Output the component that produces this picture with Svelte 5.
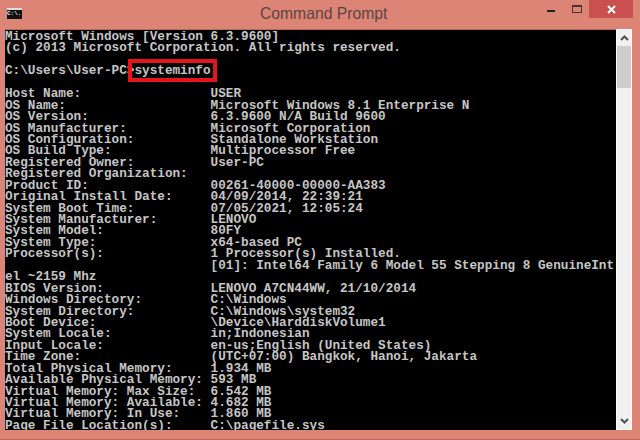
<script>
	const lines = [
		'Microsoft Windows [Version 6.3.9600]',
		'(c) 2013 Microsoft Corporation. All rights reserved.',
		'',
		'C:\\Users\\User-PC>systeminfo',
		'',
		'Host Name:                 USER',
		'OS Name:                   Microsoft Windows 8.1 Enterprise N',
		'OS Version:                6.3.9600 N/A Build 9600',
		'OS Manufacturer:           Microsoft Corporation',
		'OS Configuration:          Standalone Workstation',
		'OS Build Type:             Multiprocessor Free',
		'Registered Owner:          User-PC',
		'Registered Organization:',
		'Product ID:                00261-40000-00000-AA383',
		'Original Install Date:     04/09/2014, 22:39:21',
		'System Boot Time:          07/05/2021, 12:05:24',
		'System Manufacturer:       LENOVO',
		'System Model:              80FY',
		'System Type:               x64-based PC',
		'Processor(s):              1 Processor(s) Installed.',
		'                           [01]: Intel64 Family 6 Model 55 Stepping 8 GenuineInt',
		'el ~2159 Mhz',
		'BIOS Version:              LENOVO A7CN44WW, 21/10/2014',
		'Windows Directory:         C:\\Windows',
		'System Directory:          C:\\Windows\\system32',
		'Boot Device:               \\Device\\HarddiskVolume1',
		'System Locale:             in;Indonesian',
		'Input Locale:              en-us;English (United States)',
		'Time Zone:                 (UTC+07:00) Bangkok, Hanoi, Jakarta',
		'Total Physical Memory:     1.934 MB',
		'Available Physical Memory: 593 MB',
		'Virtual Memory: Max Size:  6.542 MB',
		'Virtual Memory: Available: 4.682 MB',
		'Virtual Memory: In Use:    1.860 MB',
		'Page File Location(s):     C:\\pagefile.sys'
	];
</script>

<div class="window">
	<header class="titlebar">
		<div class="app-icon"><span>C:\.</span></div>
		<h1 class="title">Command Prompt</h1>
		<div class="controls">
			<svg class="min" width="8" height="2" viewBox="0 0 8 2"><rect width="8" height="2" fill="#222" /></svg>
			<svg class="max" width="10" height="8" viewBox="0 0 10 8"><rect x="0.5" y="0.5" width="9" height="7" fill="none" stroke="#4a3430" /><rect x="0" y="0" width="10" height="2" fill="#4a3430" /></svg>
			<div class="close">
				<svg width="9" height="9" viewBox="0 0 9 9"><path d="M1 1 L8 8 M8 1 L1 8" stroke="#fff" stroke-width="2" /></svg>
			</div>
		</div>
	</header>
	<div class="body">
		<div class="console">
			<pre>{#each lines as line, i}<div class="line">{#if i === 3}C:\Users\User-PC&gt;<span class="cmd">systeminfo</span>{:else}{line}{/if}</div>{/each}</pre>
		</div>
		<div class="scrollbar">
			<div class="arrow up"><svg width="9" height="6" viewBox="0 0 9 6"><path d="M1 5 L4.5 1.5 L8 5" fill="none" stroke="#505050" stroke-width="2" /></svg></div>
			<div class="thumb"></div>
			<div class="track"></div>
			<div class="arrow down"><svg width="9" height="6" viewBox="0 0 9 6"><path d="M1 1 L4.5 4.5 L8 1" fill="none" stroke="#505050" stroke-width="2" /></svg></div>
		</div>
	</div>
</div>

<style>
	:global(body) {
		margin: 0;
		background: #dc8475;
	}

	.window {
		width: 640px;
		height: 440px;
		box-sizing: border-box;
		padding: 0 8px 9px 5px;
		background: #dc8475;
		border-bottom: 1px solid #b9675b;
		display: flex;
		flex-direction: column;
		overflow: hidden;
	}

	.titlebar {
		height: 29px;
		flex: none;
		display: flex;
		align-items: center;
		position: relative;
	}

	.app-icon {
		width: 15px;
		height: 11px;
		margin: -2px 0 0 2px;
		background: #111;
		border-top: 2px solid #ddd;
		box-sizing: border-box;
		overflow: hidden;
	}

	.app-icon span {
		display: block;
		font: bold 6px/8px "Liberation Mono", monospace;
		color: #eee;
	}

	.title {
		position: absolute;
		left: 255px;
		top: 4px;
		margin: 0;
		font: 400 15.7px/20px "Liberation Sans", Arial, sans-serif;
		color: #5a4440;
	}

	.controls {
		margin-left: auto;
		display: flex;
		align-items: flex-start;
		align-self: flex-start;
	}

	.min {
		margin: 10px 17px 0 0;
	}

	.max {
		margin: 5px 7px 0 0;
	}

	.close {
		width: 44px;
		height: 18px;
		margin-right: -1px;
		background: #c9504f;
		display: flex;
		align-items: center;
		justify-content: center;
	}

	.body {
		flex: 1;
		display: flex;
		min-height: 0;
	}

	.console {
		flex: 1;
		background: #000;
		overflow: hidden;
		border-top: 1px solid #b9675b;
		padding-top: 1px;
	}

	pre {
		margin: 0;
		font: 700 12.7px/11.45px "Liberation Mono", monospace;
		color: #c6c6c6;
	}

	.line {
		height: 11.45px;
		white-space: pre;
	}

	.cmd {
		padding: 0 2.4px;
		margin: 0 -2.4px;
		box-shadow: 0 0 0 4px #e8141c;
	}

	.scrollbar {
		width: 16px;
		flex: none;
		background: #f0f0f0;
		border: 1px solid #fff;
		box-sizing: border-box;
		display: flex;
		flex-direction: column;
	}

	.arrow {
		height: 16px;
		flex: none;
		display: flex;
		align-items: center;
		justify-content: center;
		background: #f0f0f0;
	}

	.thumb {
		height: 42px;
		background: #cdcdcd;
	}

	.track {
		flex: 1;
	}
</style>
